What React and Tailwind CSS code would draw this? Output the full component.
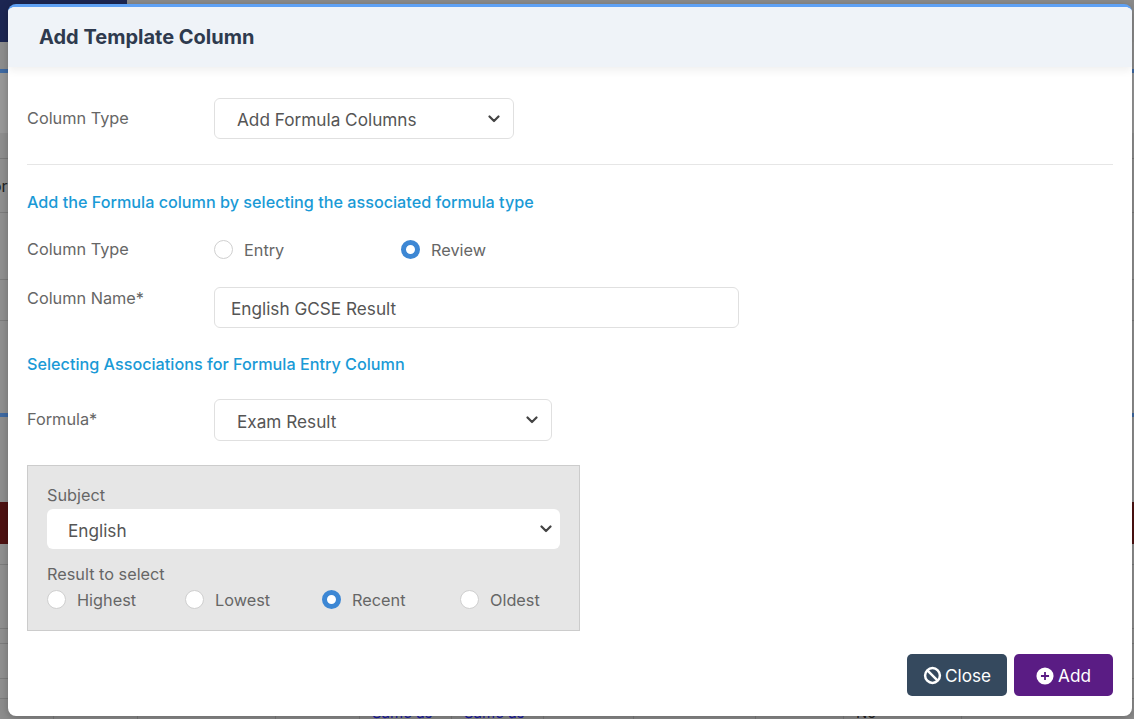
import React from "react";

const Chevron = () => (
  <svg width="12" height="8" viewBox="0 0 12 8" className="shrink-0">
    <path d="M1.5 1.5 L6 6 L10.5 1.5" fill="none" stroke="#444" strokeWidth="2.2" strokeLinecap="round" strokeLinejoin="round" />
  </svg>
);

const Radio = ({ checked, label, className = "" }) => (
  <div className={"flex items-center " + className}>
    {checked ? (
      <span className="w-[19px] h-[19px] rounded-full border-[5px] border-[#3d87d4] bg-white shrink-0" />
    ) : (
      <span className="w-[19px] h-[19px] rounded-full border border-[#cfcfcf] bg-white shrink-0" />
    )}
    <span className="ml-[11px] text-[16.3px] leading-[20px] text-[#666] pt-[1px]">{label}</span>
  </div>
);

const SelectBox = ({ value, className = "", bordered = true }) => (
  <div
    className={
      "flex items-center justify-between pl-[22px] pr-[13px] rounded-[6px] bg-white " +
      (bordered ? "border border-[#e0e0e0] " : "") +
      className
    }
  >
    <span className="text-[17.2px] text-[#555] pt-[3px]">{value}</span>
    <Chevron />
  </div>
);

export default function App() {
  return (
    <div className="relative w-[1134px] h-[719px] overflow-hidden bg-[#8b8b8b]" style={{ fontFamily: "Inter, 'Noto Sans', sans-serif" }}>
      {/* background page (dimmed) */}
      <div className="flex flex-col w-full">
        <div className="flex h-[42px]">
          <div className="w-[127px] bg-[#1c2652]" />
          <div className="flex-1 bg-[#8b8b8b]" />
        </div>
        <div className="h-[27px] bg-[#8e8e8e]" />
        <div className="h-[4px] bg-[#3f6aa3]" />
        <div className="h-[60px] bg-[#999999]" />
        <div className="h-[26px] bg-[#8f8f8f] border-b border-[#7a7a7a]" />
        <div className="h-[54px] bg-[#909090] border-b border-[#7c7c7c] flex items-center text-[#222] text-[16px]">
          <span className="-ml-[8px]">or</span>
        </div>
        <div className="h-[67px] bg-[#909090] border-b border-[#7c7c7c]" />
        <div className="h-[41px] bg-[#909090] border-b border-[#7c7c7c]" />
        <div className="h-[92px] bg-[#909090]" />
        <div className="h-[4px] bg-[#3f6aa3]" />
        <div className="h-[85px] bg-[#8f8f8f]" />
        <div className="h-[42px] bg-[#4e1212]" />
        <div className="h-[21px] bg-[#909090] border-b border-[#7c7c7c]" />
        <div className="h-[64px] bg-[#909090] border-b border-[#7c7c7c]" />
        <div className="h-[15px] bg-[#909090] border-b border-[#7c7c7c]" />
        <div className="h-[35px] bg-[#909090] border-b border-[#7c7c7c]" />
        <div className="h-[20px] bg-[#909090] border-b border-[#7c7c7c]" />
        <div className="h-[30px] bg-[#8d8d8d] flex text-[15px] leading-[16px] text-[#1a1aa8]">
          <div className="w-[54px] border-r border-[#7c7c7c]" />
          <div className="w-[84px] border-r border-[#7c7c7c]" />
          <div className="w-[138px] border-r border-[#7c7c7c]" />
          <div className="w-[84px] border-r border-[#7c7c7c]" />
          <div className="w-[92px] border-r border-[#7c7c7c] pl-[12px] pt-[6px]">Same as</div>
          <div className="w-[92px] border-r border-[#7c7c7c] pl-[12px] pt-[6px]">Same as</div>
          <div className="w-[90px] border-r border-[#7c7c7c]" />
          <div className="w-[122px] border-r border-[#7c7c7c]" />
          <div className="w-[88px] border-r border-[#7c7c7c]" />
          <div className="w-[118px] border-r border-[#7c7c7c] pl-[12px] pt-[6px] text-[#222]">No</div>
          <div className="flex-1" />
        </div>
      </div>

      {/* modal */}
      <div className="absolute left-[8px] top-[4px] w-[1124px] bg-white rounded-[8px] overflow-hidden shadow-[0_2px_8px_rgba(0,0,0,0.25)] border-t-[3px] border-[#5fa1f4]">
        <div className="relative h-[60px] bg-[#eff3f8] flex items-center pl-[31px] shadow-[0_4px_8px_rgba(0,0,0,0.06)]">
          <h2 className="text-[20px] font-bold text-[#2e3a4e] -mt-[1px]">Add Template Column</h2>
        </div>

        <div className="px-[19px] pb-[20px] flex flex-col">
          {/* Row 1 */}
          <div className="flex mt-[31px]">
            <div className="w-[187px] pt-[10px] text-[16.3px] leading-[20px] text-[#666]">Column Type</div>
            <SelectBox value="Add Formula Columns" className="w-[300px] h-[41px]" />
          </div>

          <div className="mt-[25px] border-t border-[#e6e6e6]" />

          <div className="mt-[27px] text-[16.2px] leading-[20px] font-medium text-[#1a9ad6]">
            Add the Formula column by selecting the associated formula type
          </div>

          <div className="flex mt-[27px] items-center">
            <div className="w-[187px] text-[16.3px] leading-[20px] text-[#666] -mt-[1px]">Column Type</div>
            <Radio label="Entry" className="w-[187px]" />
            <Radio checked label="Review" />
          </div>

          <div className="flex mt-[27px]">
            <div className="w-[187px] pt-[1px] text-[16.3px] leading-[20px] text-[#666]">Column Name*</div>
            <div className="w-[525px] h-[41px] rounded-[6px] border border-[#e0e0e0] flex items-center pl-[16px]">
              <span className="text-[17.2px] text-[#555] pt-[2px]">English GCSE Result</span>
            </div>
          </div>

          <div className="mt-[26px] text-[16.2px] leading-[20px] font-medium text-[#1a9ad6]">
            Selecting Associations for Formula Entry Column
          </div>

          <div className="flex mt-[25px]">
            <div className="w-[187px] pt-[10px] text-[16.3px] leading-[20px] text-[#666]">Formula*</div>
            <SelectBox value="Exam Result" className="w-[338px] h-[42px]" />
          </div>

          <div className="mt-[24px] w-[553px] h-[166px] bg-[#e6e6e6] border border-[#cccccc] px-[19px] pt-[19px]">
            <div className="text-[16.3px] leading-[20px] text-[#666]">Subject</div>
            <SelectBox value="English" bordered={false} className="mt-[4px] w-[513px] h-[40px] !pl-[21px] !pr-[8px]" />
            <div className="mt-[15px] text-[16.3px] leading-[20px] text-[#666]">Result to select</div>
            <div className="flex mt-[5px]">
              <Radio label="Highest" className="w-[138px]" />
              <Radio label="Lowest" className="w-[137px]" />
              <Radio checked label="Recent" className="w-[138px]" />
              <Radio label="Oldest" />
            </div>
          </div>

          <div className="flex justify-end gap-[7px] mt-[23px]">
            <button className="w-[100px] h-[42px] rounded-[5px] bg-[#35495e] text-white flex items-center justify-center gap-[3px] text-[17.2px] pt-[1px]">
              <svg width="19" height="19" viewBox="0 0 20 20">
                <circle cx="10" cy="10" r="7.8" fill="none" stroke="white" strokeWidth="2.6" />
                <path d="M4.6 4.6 L15.4 15.4" stroke="white" strokeWidth="2.6" />
              </svg>
              Close
            </button>
            <button className="w-[99px] h-[42px] rounded-[5px] bg-[#5a1c84] text-white flex items-center justify-center gap-[4px] text-[17.2px] pt-[1px]">
              <svg width="18" height="18" viewBox="0 0 20 20">
                <circle cx="10" cy="10" r="9.5" fill="white" />
                <path d="M10 5.5 V14.5 M5.5 10 H14.5" stroke="#5a1c84" strokeWidth="2" />
              </svg>
              Add
            </button>
          </div>
        </div>
      </div>
    </div>
  );
}
